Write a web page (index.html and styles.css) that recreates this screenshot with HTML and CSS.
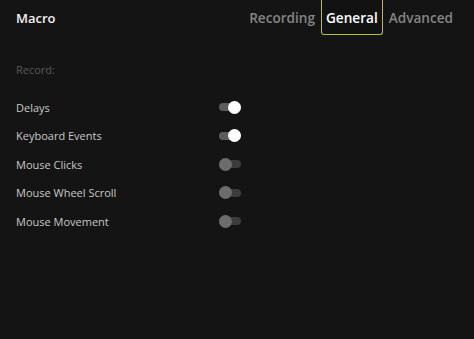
FILE: index.html
```html
<!DOCTYPE html>
<html lang="en">
<head>
    <meta charset="UTF-8">
    <meta name="viewport" content="width=device-width, initial-scale=1.0">
    <title>Macro</title>
    <link rel="stylesheet" href="styles.css">
</head>
<body>
    <div class="topbar">
        <div class="title">Macro</div>
        <div class="tabs">
            <div class="tab">Recording</div>
            <div class="tab active">General</div>
            <div class="tab">Advanced</div>
        </div>
    </div>

    <div class="section">
        <div class="section-label">Record:</div>
        <div class="settings">
            <label class="row"><span>Delays</span><input type="checkbox" class="toggle" checked></label>
            <label class="row"><span>Keyboard Events</span><input type="checkbox" class="toggle" checked></label>
            <label class="row"><span>Mouse Clicks</span><input type="checkbox" class="toggle"></label>
            <label class="row"><span>Mouse Wheel Scroll</span><input type="checkbox" class="toggle"></label>
            <label class="row"><span>Mouse Movement</span><input type="checkbox" class="toggle"></label>
        </div>
    </div>
</body>
</html>
```

FILE: styles.css
```css
body {
    margin: 0;
    background-color: #141414;
    font-family: 'Open Sans', 'Noto Sans', sans-serif;
    color: #c8c8c8;
}

.topbar {
    display: flex;
    justify-content: space-between;
    align-items: flex-start;
    height: 36px;
    padding: 0 16px;
}

.title {
    font-size: 13px;
    font-weight: 600;
    color: #f2f2f2;
    line-height: 36px;
}

.tabs {
    display: flex;
    gap: 1px;
}

.tab {
    height: 35px;
    line-height: 35px;
    padding: 0 4px;
    font-size: 13.6px;
    font-weight: 600;
    color: #858585;
    border: 1px solid transparent;
    border-top: none;
    box-sizing: border-box;
}

.tab.active {
    color: #ffffff;
    border-color: #b8b46c;
    border-radius: 0 0 3px 3px;
    background-color: #121212;
}

.section {
    padding: 26px 16px 0;
}

.section-label {
    font-size: 11px;
    line-height: 16px;
    color: #5a5a5a;
    margin-bottom: 15px;
}

.settings {
    width: 225px;
}

.row {
    display: flex;
    justify-content: space-between;
    align-items: center;
    height: 28.5px;
    font-size: 11px;
}

/* switch drawn from the checkbox itself */
.toggle {
    appearance: none;
    -webkit-appearance: none;
    margin: 0;
    width: 22px;
    height: 13px;
    position: relative;
    cursor: pointer;
}

.toggle::before {
    content: '';
    position: absolute;
    left: 0;
    right: 0;
    top: 2.5px;
    height: 8px;
    border-radius: 4px;
    background-color: #3c3c3c;
}

.toggle::after {
    content: '';
    position: absolute;
    left: 0;
    top: 0;
    width: 13px;
    height: 13px;
    border-radius: 50%;
    background-color: #6c6c6c;
}

.toggle:checked::before {
    background-color: #5c5c5c;
}

.toggle:checked::after {
    left: 9px;
    background-color: #ffffff;
}
```
